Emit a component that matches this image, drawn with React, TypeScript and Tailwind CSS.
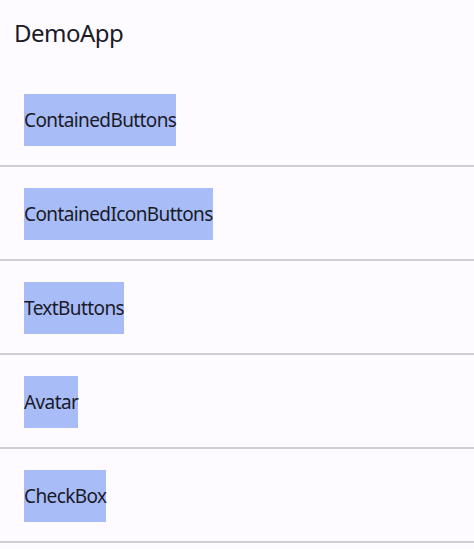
import React from "react";

const items = ["ContainedButtons", "ContainedIconButtons", "TextButtons", "Avatar", "CheckBox"];

export default function App() {
  return (
    <div className="w-[474px] h-[549px] overflow-hidden bg-[#fdfbff] text-[#1a1b26]" style={{ fontFamily: '"Noto Sans", sans-serif' }}>
      <div className="h-[73px] pl-[14px] pt-[15px]">
        <div className="text-[24px] leading-[36px] tracking-[-0.5px]">DemoApp</div>
      </div>
      {items.map((t) => (
        <div key={t} className="flex flex-col">
          <div className="pl-[24px] pt-[21px] pb-[19px]">
            <div className="inline-flex h-[52px] items-center bg-[#a8bcf8] text-[19px] tracking-[-0.6px]">{t}</div>
          </div>
          <div className="h-[2px] bg-[#d0ced3]" />
        </div>
      ))}
    </div>
  );
}
